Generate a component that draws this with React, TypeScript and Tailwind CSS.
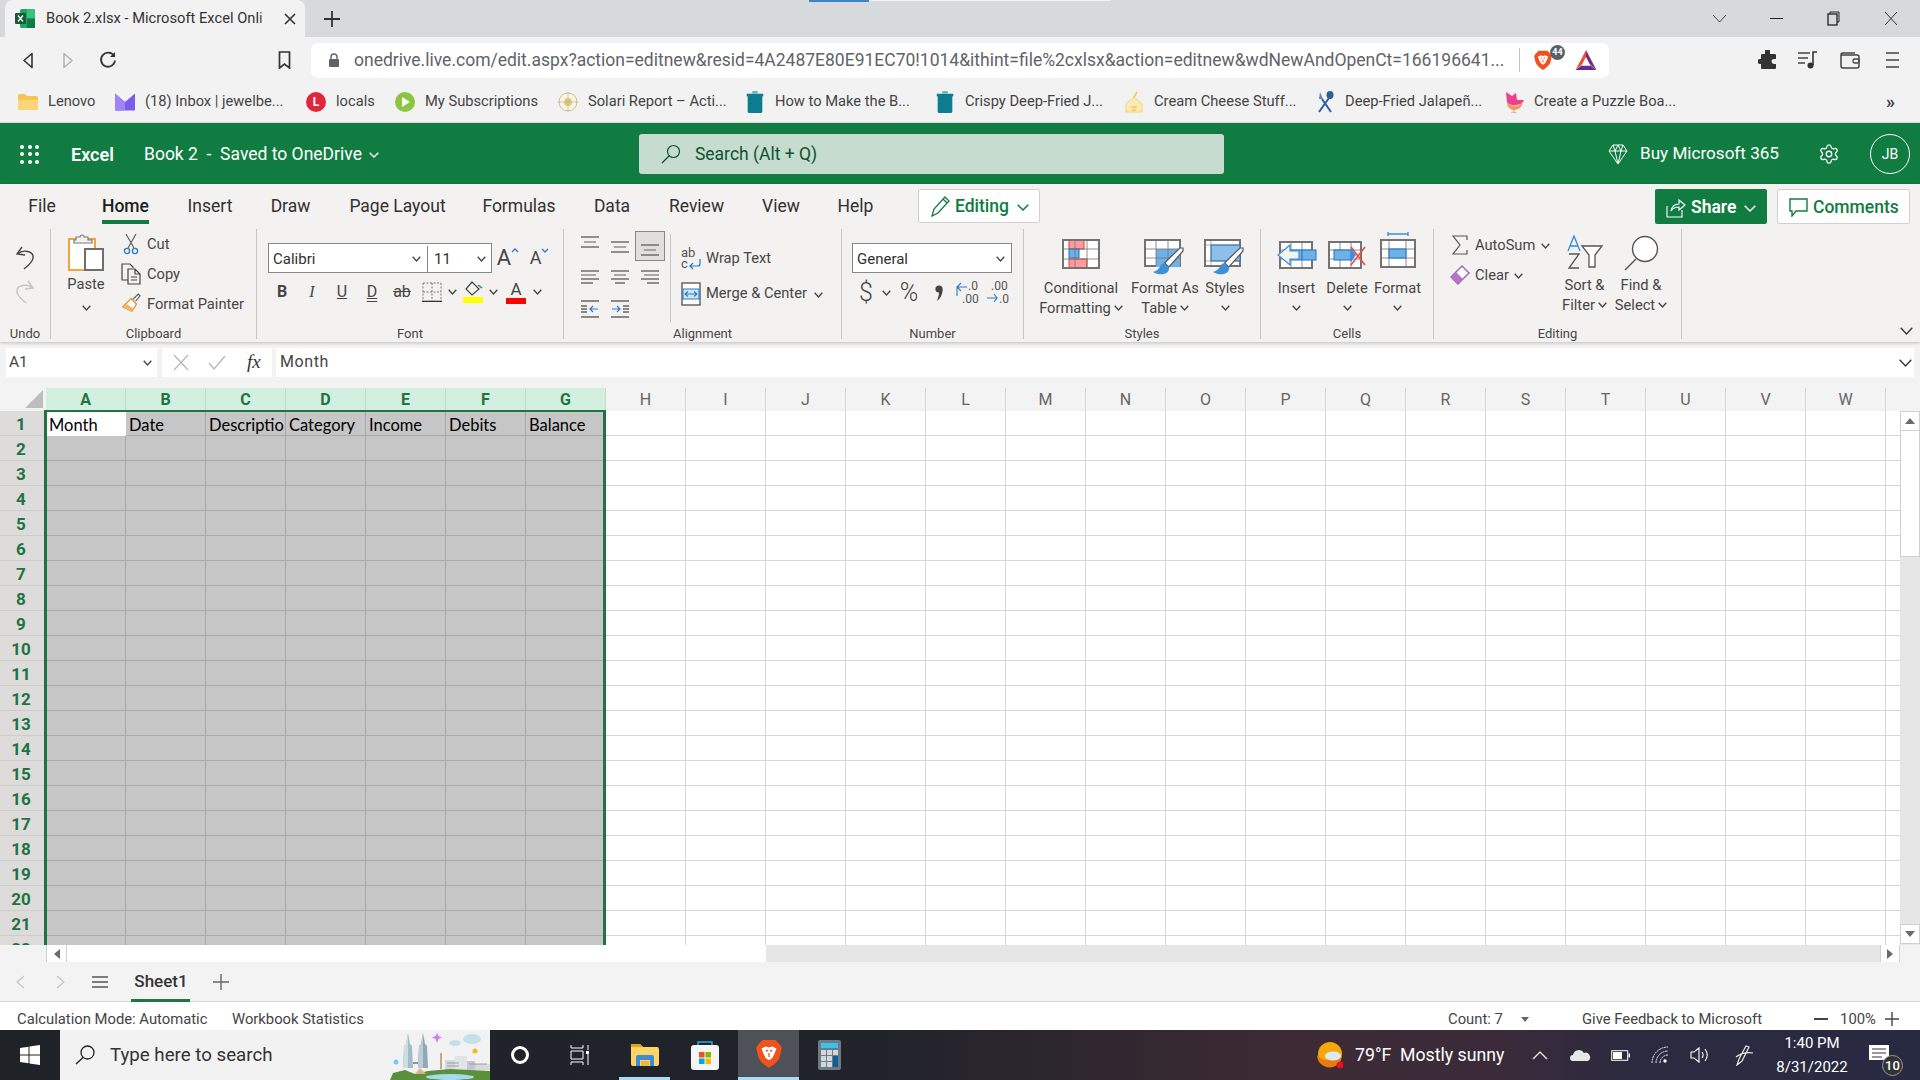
import React from "react";
import { Settings } from "lucide-react";

const Chev = ({ c = "#444", w = 9, h = 5, sw = 1.3 }: { c?: string; w?: number; h?: number; sw?: number }) => (
  <svg width={w} height={h + 1} viewBox={`0 0 ${w} ${h + 1}`} fill="none" className="inline-block shrink-0">
    <path d={`M.7.7 L${w / 2} ${h} L${w - 0.7} .7`} stroke={c} strokeWidth={sw} />
  </svg>
);

const Brave = ({ s = 24 }: { s?: number }) => (
  <svg width={s} height={s * 1.15} viewBox="0 0 24 28">
    <path d="M6 1 H18 L22 5 L24 8 L22 17 C20 22 15 25 12 27 C9 25 4 22 2 17 L0 8 L2 5 Z" fill="#f1511b" />
    <path d="M5 9 L9 7 L12 8 L15 7 L19 9 L17 14 L15 18 L12 20 L9 18 L7 14 Z" fill="#fff" />
    <path d="M9 11 h2 M13 11 h2 M12 13 v4" stroke="#f1511b" strokeWidth="1.2" />
  </svg>
);

const Bat = () => (
  <svg width="22" height="20" viewBox="0 0 24 23">
    <polygon points="12,0 0,23 8,16 12,8" fill="#e8552d" />
    <polygon points="12,0 24,23 16,16 12,8" fill="#7b2a7f" />
    <polygon points="0,23 24,23 16,17 8,17" fill="#662d91" />
    <polygon points="12,9 7,18 17,18" fill="#fff" />
  </svg>
);

const Trash = () => (
  <svg width="20" height="22" viewBox="0 0 20 24">
    <rect x="2" y="5" width="16" height="19" rx="2" fill="#0e7c8f" />
    <rect x="1" y="3" width="18" height="3" fill="#0e7c8f" />
    <rect x="7" y="0" width="6" height="3" fill="#6cb6c4" />
  </svg>
);

const bookmarks: { t: string; w: string; i: React.ReactNode }[] = [
  { t: "Lenovo", w: "w-[97px]", i: <svg width="20" height="20" viewBox="0 0 20 20"><path d="M0 4 a2 2 0 0 1 2-2 h5 l2 2 h9 a2 2 0 0 1 2 2 v10 a2 2 0 0 1-2 2 H2 a2 2 0 0 1-2-2Z" fill="#f5c452" /><path d="M0 8 H20 V16 a2 2 0 0 1-2 2 H2 a2 2 0 0 1-2-2Z" fill="#fbd677" /></svg> },
  { t: "(18) Inbox | jewelbe...", w: "w-[191px]", i: <svg width="21" height="18" viewBox="0 0 21 18"><path d="M0 0 L10.5 9 L21 0 V18 H0Z" fill="#7a5cf0" /><path d="M0 0 L10.5 9 V18 H0Z" fill="#9d84f7" /></svg> },
  { t: "locals", w: "w-[89px]", i: <span className="flex h-[20px] w-[20px] items-center justify-center rounded-full bg-[#e0263f] text-[12px] font-bold text-white">L</span> },
  { t: "My Subscriptions", w: "w-[163px]", i: <svg width="20" height="20" viewBox="0 0 20 20"><circle cx="10" cy="10" r="10" fill="#8cc63f" /><path d="M7 5 L15 10 L7 15Z" fill="#fff" /></svg> },
  { t: "Solari Report – Acti...", w: "w-[187px]", i: <svg width="20" height="20" viewBox="0 0 20 20"><circle cx="10" cy="10" r="9" fill="#faf6ea" stroke="#c9b98a" /><circle cx="10" cy="10" r="4" fill="#e2c67a" /><path d="M10 0 V20 M0 10 H20" stroke="#c9b98a" strokeWidth=".8" /></svg> },
  { t: "How to Make the B...", w: "w-[190px]", i: <Trash /> },
  { t: "Crispy Deep-Fried J...", w: "w-[189px]", i: <Trash /> },
  { t: "Cream Cheese Stuff...", w: "w-[191px]", i: <svg width="20" height="22" viewBox="0 0 20 22"><path d="M2 21 V13 L10 6 L18 13 V21Z" fill="#fbeab8" stroke="#f5d06f" /><path d="M10 6 L13 1 M7 16 h6 M8 19 h4" stroke="#f5c452" strokeWidth="1.5" /></svg> },
  { t: "Deep-Fried Jalapeñ...", w: "w-[189px]", i: <svg width="18" height="22" viewBox="0 0 18 22"><path d="M3 21 L13 7 M15 21 L6 8" stroke="#2d6099" strokeWidth="2" /><ellipse cx="14" cy="4" rx="3.5" ry="4" fill="#2d6099" /><path d="M4 1 L7 8 L3 8Z" fill="#5b86b5" /></svg> },
  { t: "Create a Puzzle Boa...", w: "w-[170px]", i: <svg width="20" height="22" viewBox="0 0 20 22"><path d="M2 1 L8 5 L12 2 L13 9 L20 9 C18 15 6 16 3 11Z" fill="#ee3e8e" /><path d="M3 11 C8 17 16 15 19 11 C18 17 14 19 9 19 C5 18 3 15 3 11Z" fill="#f19a5b" /><path d="M10 19 V22 M7 22 H13" stroke="#e88" /></svg> },
];

const gridStroke = "#737373";
const T = ({ children }: { children?: React.ReactNode }) => (
  <svg width="38" height="30" viewBox="0 0 38 30" className="block">
    <rect x="1" y="1" width="36" height="28" fill="#fff" />
    {children}
    <path d="M1 10 H37 M1 20 H37 M13 1 V29 M25 1 V29" stroke={gridStroke} strokeWidth="1" fill="none" opacity=".8" />
    <rect x="1" y="1" width="36" height="28" fill="none" stroke={gridStroke} strokeWidth="2" />
  </svg>
);
const Brush = () => (
  <g>
    <path d="M36 9 L39 9 L39 12 L25 28 L20.5 24Z" fill="#fff" stroke="#555" strokeWidth="1.2" />
    <path d="M20.5 24 C15 25 17 31 9 33 C16 37 26 36 25 28Z" fill="#3f8fd4" />
  </g>
);

const Conditional = () => (
  <T>
    <rect x="7" y="1" width="15" height="9" fill="#ff9aa2" stroke="#d9402b" />
    <rect x="7" y="10" width="10" height="9" fill="#6fb0e6" stroke="#1b74c5" />
    <rect x="7" y="20" width="18" height="9" fill="#ff9aa2" stroke="#d9402b" />
  </T>
);
const FormatTable = () => (
  <svg width="42" height="38" viewBox="0 0 42 38" className="block">
    <rect x="1" y="1" width="35" height="26" fill="#fff" stroke={gridStroke} strokeWidth="2" />
    <rect x="12" y="10" width="24" height="18" fill="#6fb0e6" />
    <path d="M1 10 H36 M1 19 H36 M12 1 V27 M24 1 V27" stroke={gridStroke} strokeWidth="1" opacity=".8" />
    <Brush />
  </svg>
);
const StylesIcon = () => (
  <svg width="42" height="38" viewBox="0 0 42 38" className="block">
    <rect x="1" y="1" width="35" height="26" fill="#fff" stroke={gridStroke} strokeWidth="2" />
    <rect x="7" y="6" width="29" height="16" fill="#8cbfec" stroke="#1b74c5" />
    <path d="M1 6 H36 M1 22 H36 M7 1 V27" stroke={gridStroke} opacity=".6" />
    <Brush />
  </svg>
);
const InsertIcon = () => (
  <svg width="40" height="28" viewBox="0 0 40 28" className="block">
    <rect x="3" y="1" width="32" height="26" fill="#fff" stroke={gridStroke} strokeWidth="2" />
    <path d="M3 9 H35 M3 18 H35 M14 1 V27 M25 1 V27" stroke={gridStroke} strokeWidth="1" opacity=".8" />
    <rect x="13" y="9" width="26" height="10" fill="#6fb0e6" stroke="#1b74c5" />
    <path d="M25 9 V19" stroke="#1b74c5" />
    <path d="M13 4 L1 14 L13 24 V18 H22 V10 H13Z" fill="#f3f2f1" stroke="#3f8fd4" strokeWidth="1.2" />
  </svg>
);
const DeleteIcon = () => (
  <svg width="38" height="28" viewBox="0 0 38 28" className="block">
    <rect x="1" y="1" width="32" height="26" fill="#fff" stroke={gridStroke} strokeWidth="2" />
    <path d="M1 9 H33 M1 18 H33 M12 1 V27 M23 1 V27" stroke={gridStroke} strokeWidth="1" opacity=".8" />
    <rect x="6" y="9" width="17" height="10" fill="#6fb0e6" stroke="#1b74c5" />
    <path d="M23 7 L28 14 L23 21Z" fill="#3f8fd4" />
    <path d="M23 6 L37 24 M37 6 L23 24" stroke="#ef4a4a" strokeWidth="1.6" />
  </svg>
);
const FormatIcon = () => (
  <svg width="36" height="36" viewBox="0 0 36 36" className="block">
    <path d="M8 2 H28 M8 0 V4 M28 0 V4" stroke="#3f8fd4" strokeWidth="1.4" />
    <rect x="1" y="8" width="34" height="27" fill="#fff" stroke={gridStroke} strokeWidth="2" />
    <path d="M1 17 H35 M1 26 H35 M9 8 V35 M26 8 V35" stroke={gridStroke} strokeWidth="1" opacity=".8" />
    <rect x="9" y="17" width="17" height="9" fill="#6fb0e6" stroke="#1b74c5" />
  </svg>
);

function Labelled({ icon, lines, w, chevOn, iconH = "h-[39px]" }: { icon: React.ReactNode; lines: string[]; w: string; chevOn?: boolean; iconH?: string }) {
  return (
    <div className={`${w} flex flex-col items-center`}>
      <div className={`${iconH} flex items-start justify-center`}>{icon}</div>
      <div className="h-[20px] whitespace-nowrap leading-[20px]">{lines[0]}</div>
      <div className="flex h-[20px] items-center gap-[3px] whitespace-nowrap leading-[20px]">
        {lines[1] && <span>{lines[1]}</span>}
        {chevOn && <Chev />}
      </div>
    </div>
  );
}

const Lines = ({ ys, xs }: { ys: number[]; xs: [number, number][] }) => (
  <svg width="20" height="24" viewBox="0 0 20 24">
    {ys.map((y, i) => (
      <path key={i} d={`M${xs[i][0]} ${y} H${xs[i][1]}`} stroke={i === 1 ? "#888" : "#666"} strokeWidth="1.4" />
    ))}
  </svg>
);

const Group = ({ w, label, children, last }: { w: string; label: string; children: React.ReactNode; last?: boolean }) => (
  <div className={`${w} relative h-[110px] shrink-0 ${last ? "" : "border-r border-[#c8c6c4]"}`}>
    <div className="h-[96px]">{children}</div>
    <div className="h-[18px] text-center text-[13px] leading-[18px] text-[#484644]">{label}</div>
  </div>
);

const Tab = ({ w, t }: { w: string; t: string }) => (
  <div className={`${w} pt-[12px] text-center leading-[20px]`}>{t}</div>
);

const cols = "ABCDEFGHIJKLMNOPQRSTUVW".split("");
const row1 = ["Month", "Date", "Descriptio", "Category", "Income", "Debits", "Balance"];
const rows = Array.from({ length: 22 }, (_, i) => i + 1);

function Sheet() {
  return (
    <div className="relative h-[557px] w-[1900px] overflow-hidden bg-white">
      <div className="grid grid-cols-[46px_repeat(23,80px)_1fr]">
        <div className="flex h-[23px] items-end justify-end bg-[#f3f3f3] pr-[3px] pb-[3px]">
          <svg width="18" height="18" viewBox="0 0 18 18"><polygon points="18,0 18,18 0,18" fill="#bdbdbd" /></svg>
        </div>
        {cols.map((c, i) => (
          <div
            key={c}
            className={
              i < 7
                ? "flex h-[23px] items-center justify-center border-r border-[#c6d8cd] bg-[#d3efe0] text-[16px] font-bold text-[#217346]"
                : "flex h-[23px] items-center justify-center border-r border-[#d6d6d6] bg-[#f3f3f3] text-[16px] text-[#666]"
            }
          >
            {c}
          </div>
        ))}
        <div className="h-[23px] bg-[#f3f3f3]" />
        {rows.map((r) => (
          <React.Fragment key={r}>
            <div className="flex h-[25px] items-center justify-center border-b border-[#cfcdcb] bg-[#dedcda] pr-[4px] pt-[4px] text-[17px] font-bold text-[#217346]">
              {r}
            </div>
            {cols.map((c, i) => {
              const sel = i < 7;
              const white = r === 1 && i === 0;
              return (
                <div
                  key={c}
                  className={
                    white
                      ? "h-[25px] overflow-hidden whitespace-nowrap bg-white pl-[3px] pt-[3px] font-[Lato,sans-serif] text-[16.5px] leading-[23px] text-black"
                      : sel
                      ? "h-[25px] overflow-hidden whitespace-nowrap border-r border-b border-[#a9a9a9] bg-[#c6c6c6] pl-[3px] pt-[3px] font-[Lato,sans-serif] text-[16.5px] leading-[23px] text-black"
                      : "h-[25px] border-r border-b border-[#d6d6d6] bg-white"
                  }
                >
                  {r === 1 && sel ? row1[i] : ""}
                </div>
              );
            })}
            <div className="h-[25px] border-b border-[#d6d6d6] bg-white" />
          </React.Fragment>
        ))}
      </div>
      <div className="pointer-events-none absolute left-[44px] top-[22px] h-[800px] w-[562px] border-x-[3px] border-y-[2px] border-[#217346]" />
    </div>
  );
}

export default function App() {
  return (
    <div className="flex h-[1080px] w-[1920px] flex-col overflow-hidden bg-[#f3f3f3] font-[Roboto,sans-serif] text-[#333]">
      {/* Browser tab strip */}
      <div className="relative flex h-[37px] shrink-0 bg-[#d6dadd] pl-[5px]">
        <div className="absolute left-[809px] top-0 h-[2px] w-[60px] bg-[#3d85c6]" />
        <div className="absolute left-[869px] top-0 h-[1px] w-[241px] bg-[#f2f2f2]" />
        <div className="flex h-[37px] w-[300px] items-center rounded-t-[8px] bg-[#f2f2f2] pl-[10px]">
          <svg width="20" height="19" viewBox="0 0 20 19" className="shrink-0">
            <rect x="5" y="0" width="15" height="19" rx="1.5" fill="#21a366" />
            <rect x="12" y="0" width="8" height="9.5" fill="#33c481" />
            <rect x="12" y="9.5" width="8" height="9.5" fill="#107c41" />
            <rect x="0" y="4" width="11" height="11" rx="1" fill="#185c37" />
            <path d="M3 6.5 L8 12.5 M8 6.5 L3 12.5" stroke="#fff" strokeWidth="1.2" />
          </svg>
          <div className="relative ml-[11px] w-[227px] whitespace-nowrap text-[14.7px]">
            Book 2.xlsx - Microsoft Excel Onli
            <span className="absolute right-0 top-0 h-full w-[14px] bg-[linear-gradient(90deg,rgba(242,242,242,0),#f2f2f2)]" />
          </div>
          <svg width="12" height="12" viewBox="0 0 12 12" className="ml-[11px]"><path d="M1 1 L11 11 M11 1 L1 11" stroke="#333" strokeWidth="1.6" /></svg>
        </div>
        <div className="flex w-[54px] items-center justify-center">
          <svg width="16" height="16" viewBox="0 0 16 16"><path d="M8 0 V16 M0 8 H16" stroke="#333" strokeWidth="1.8" /></svg>
        </div>
        <div className="flex-1" />
        <div className="flex w-[58px] items-center justify-center"><svg width="15" height="9" viewBox="0 0 15 9" fill="none"><path d="M1 1 L7.5 8 L14 1" stroke="#444" strokeWidth="1" /></svg></div>
        <div className="flex w-[57px] items-center justify-center"><div className="h-[1.5px] w-[13px] bg-[#222]" /></div>
        <div className="flex w-[57px] items-center justify-center"><svg width="13" height="15" viewBox="0 0 13 15" fill="none"><rect x="1" y="3" width="9" height="11" stroke="#222" strokeWidth="1.3" /><path d="M3 3 V1 H12 V11 H10" stroke="#222" /></svg></div>
        <div className="flex w-[58px] items-center justify-center"><svg width="14" height="15" viewBox="0 0 14 15"><path d="M1 1 L13 14 M13 1 L1 14" stroke="#333" strokeWidth="1" /></svg></div>
      </div>
      {/* Browser toolbar */}
      <div className="flex h-[46px] shrink-0 items-center bg-[#f2f2f2] pl-[8px]">
        <div className="flex w-[40px] justify-center"><svg width="12" height="17" viewBox="0 0 12 17" fill="none"><path d="M10 1.5 L2 8.5 L10 15.5Z" stroke="#333" strokeWidth="1.6" strokeLinejoin="round" /></svg></div>
        <div className="flex w-[40px] justify-center"><svg width="12" height="17" viewBox="0 0 12 17" fill="none"><path d="M2 1.5 L10 8.5 L2 15.5Z" stroke="#b5b5b5" strokeWidth="1.6" strokeLinejoin="round" /></svg></div>
        <div className="flex w-[40px] justify-center"><svg width="18" height="18" viewBox="0 0 18 18" fill="none"><path d="M15 5 A7 7 0 1 0 16 9.5" stroke="#333" strokeWidth="1.8" /><path d="M16 1 V6 H11Z" fill="#333" /></svg></div>
        <div className="ml-[136px] flex w-[40px] justify-center"><svg width="13" height="18" viewBox="0 0 13 18" fill="none"><path d="M1.5 1 H11.5 V17 L6.5 13 L1.5 17Z" stroke="#333" strokeWidth="1.7" /></svg></div>
        <div className="ml-[7px] flex h-[35px] w-[1298px] items-center rounded-[7px] bg-white pl-[17px]">
          <svg width="12" height="14" viewBox="0 0 12 14" className="shrink-0"><rect x="1" y="6" width="10" height="8" rx="1" fill="#5f6368" /><path d="M3 6 V4 a3 3 0 0 1 6 0 V6" stroke="#5f6368" strokeWidth="1.4" fill="none" /></svg>
          <div className="ml-[14px] w-[1151px] whitespace-nowrap text-[17.5px] text-[#5f6368]">onedrive.live.com/edit.aspx?action=editnew&amp;resid=4A2487E80E91EC70!1014&amp;ithint=file%2cxlsx&amp;action=editnew&amp;wdNewAndOpenCt=166196641...</div>
          <div className="ml-[14px] h-[24px] w-px bg-[#c4c4c4]" />
          <div className="relative ml-[14px] flex h-[28px] w-[18px] items-center">
            <Brave s={18} />
            <span className="absolute left-[16px] top-[-1px] flex h-[15px] w-[15px] items-center justify-center rounded-full bg-[#5a5f6b] text-[9px] font-bold text-white">44</span>
          </div>
          <div className="ml-[23px]"><Bat /></div>
        </div>
        <div className="ml-[139px] flex w-[40px] justify-center"><svg width="20" height="20" viewBox="0 0 20 20"><path d="M7 1 a2.5 2.5 0 0 1 5 0 V4 H17 a1 1 0 0 1 1 1 V9 H16 a2.5 2.5 0 0 0 0 5 H18 V18 a1 1 0 0 1-1 1 H4 a1 1 0 0 1-1-1 V14 H2 a2.5 2.5 0 0 1 0-5 H3 V5 a1 1 0 0 1 1-1 H7Z" fill="#333" /></svg></div>
        <div className="flex w-[40px] justify-center"><svg width="20" height="18" viewBox="0 0 20 18" fill="none"><path d="M0 2 H12 M0 7 H10 M0 12 H7" stroke="#444" strokeWidth="1.6" /><path d="M15 14 V1 H19" stroke="#333" strokeWidth="1.6" /><circle cx="12.5" cy="14.5" r="3" fill="#333" /></svg></div>
        <div className="ml-[2px] flex w-[40px] justify-center"><svg width="20" height="18" viewBox="0 0 20 18" fill="none"><path d="M1 4 a2 2 0 0 1 2-2 H15 M1 4 V15 a2 2 0 0 0 2 2 H17 a2 2 0 0 0 2-2 V6 a2 2 0 0 0-2-2 H1" stroke="#444" strokeWidth="1.5" /><rect x="13" y="8" width="6" height="4" rx="1.5" stroke="#444" strokeWidth="1.3" /></svg></div>
        <div className="ml-[2px] flex w-[40px] justify-center"><svg width="13" height="16" viewBox="0 0 13 16"><path d="M0 1 H13 M0 8 H13 M0 15 H13" stroke="#444" strokeWidth="1.7" /></svg></div>
      </div>
      {/* Bookmarks */}
      <div className="flex h-[40px] shrink-0 items-center border-b border-[#d8d8d8] bg-[#f2f2f2] pb-[2px] pl-[18px] text-[14.7px] text-[#444]">
        {bookmarks.map((b) => (
          <div key={b.t} className={`${b.w} flex shrink-0 items-center whitespace-nowrap`}>
            <span className="flex h-[24px] w-[20px] shrink-0 items-center justify-center">{b.i}</span>
            <span className="ml-[10px]">{b.t}</span>
          </div>
        ))}
        <div className="ml-[212px] text-[18px] font-bold leading-[18px]">»</div>
      </div>
      {/* Excel title bar */}
      <div className="flex h-[61px] shrink-0 items-center bg-[#107c41] pt-[1px] text-[17.5px] text-white">
        <div className="ml-[20px] grid w-[19px] grid-cols-3 gap-[3.5px]">
          {Array.from({ length: 9 }, (_, i) => <span key={i} className="h-[4px] w-[4px] rounded-full bg-white" />)}
        </div>
        <div className="ml-[32px] w-[73px] text-[18px] font-semibold">Excel</div>
        <div className="whitespace-nowrap">Book 2&nbsp; -&nbsp; Saved to OneDrive</div>
        <div className="ml-[7px]"><Chev c="#fff" w={10} h={5} /></div>
        <div className="ml-[260px] flex h-[40px] w-[585px] items-center rounded-[3px] bg-[#c5dccf] pl-[22px] text-[#10522f]">
          <svg width="20" height="20" viewBox="0 0 20 20" fill="none"><circle cx="12.5" cy="7.5" r="6" stroke="#10522f" strokeWidth="1.2" /><path d="M8 12 L1 19" stroke="#10522f" strokeWidth="1.3" /></svg>
          <span className="ml-[14px]">Search (Alt + Q)</span>
        </div>
        <div className="flex-1" />
        <svg width="20" height="21" viewBox="0 0 20 21" fill="none" className="mr-[12px]"><path d="M5 1 H15 L19 7 L10 20 L1 7Z M1 7 H19 M7 7 L10 20 L13 7 M5 1 L7 7 L10 1 L13 7 L15 1" stroke="#fff" strokeWidth="1" /></svg>
        <div className="w-[178px] whitespace-nowrap text-[17.1px]">Buy Microsoft 365</div>
        <div className="flex w-[22px] justify-center"><Settings size={22} strokeWidth={1.4} color="#fff" /></div>
        <div className="ml-[30px] mr-[10px] flex h-[40px] w-[40px] items-center justify-center rounded-full border border-white text-[14px]">JB</div>
      </div>
      {/* Ribbon */}
      <div className="z-10 flex h-[158px] shrink-0 flex-col bg-[#f3f2f1] text-[14.7px] text-[#484644] shadow-[0_1px_3px_rgba(0,0,0,0.22)]">
        <div className="flex h-[40px] shrink-0 pl-[9px] text-[17.5px] text-[#323130]">
          <Tab w="w-[66px]" t="File" />
          <div className="flex w-[101px] justify-center pt-[12px]">
            <span className="inline-block h-[28px] border-b-[4px] border-[#107c41] font-medium leading-[20px] text-[#201f1e]">Home</span>
          </div>
          <Tab w="w-[68px]" t="Insert" />
          <Tab w="w-[93px]" t="Draw" />
          <Tab w="w-[121px]" t="Page Layout" />
          <Tab w="w-[122px]" t="Formulas" />
          <Tab w="w-[64px]" t="Data" />
          <Tab w="w-[105px]" t="Review" />
          <Tab w="w-[64px]" t="View" />
          <Tab w="w-[85px]" t="Help" />
          <div className="ml-[20px] mt-[5px] flex h-[34px] w-[122px] items-center rounded-[2px] border border-[#d1d1d1] bg-white pl-[12px] pt-[1px] font-medium text-[#107c41]">
            <svg width="19" height="21" viewBox="0 0 19 21" fill="none"><path d="M1 20 L3 13 L14 1 L18 5 L7 17Z M12 3 L16 7" stroke="#107c41" strokeWidth="1.3" /></svg>
            <span className="ml-[5px]">Editing</span>
            <span className="ml-[8px]"><Chev c="#107c41" w={12} h={6} sw={1.5} /></span>
          </div>
          <div className="flex-1" />
          <div className="mt-[5px] flex h-[35px] w-[112px] items-center rounded-[2px] bg-[#107c41] pl-[11px] pt-[1px] font-semibold text-white">
            <svg width="20" height="21" viewBox="0 0 20 21" fill="none"><path d="M1 9 V20 H16 V13 M5 14 C6 9 9 7 13 7 V3 L19 8 L13 13 V10 C10 10 7 11 5 14Z" stroke="#fff" strokeWidth="1.1" /></svg>
            <span className="ml-[5px]">Share</span>
            <span className="ml-[8px]"><Chev c="#fff" w={12} h={6} sw={1.4} /></span>
          </div>
          <div className="ml-[10px] mr-[10px] mt-[5px] flex h-[35px] w-[133px] items-center rounded-[2px] border border-[#d1d1d1] bg-white pl-[11px] pt-[1px] font-medium text-[#107c41]">
            <svg width="19" height="19" viewBox="0 0 19 19" fill="none"><path d="M1 1 H18 V13 H7 L3 18 V13 H1Z" stroke="#107c41" strokeWidth="1.4" /></svg>
            <span className="ml-[5px]">Comments</span>
          </div>
        </div>
        <div className="mt-[5px] flex">
          <Group w="w-[51px]" label="Undo">
            <div className="flex flex-col items-center pt-[17px]">
              <svg width="20" height="24" viewBox="0 0 20 24" fill="none"><path d="M7 1 L2 8 L10 9 M2.5 8 C8 3 19 5 18 12 C17.5 17 12 20 9 23" stroke="#484644" strokeWidth="1.4" /></svg>
              <svg width="20" height="24" viewBox="0 0 20 24" fill="none" className="mt-[10px]"><path d="M13 1 L18 8 L10 9 M17.5 8 C12 3 1 5 2 12 C2.5 17 8 20 11 23" stroke="#c4c4c4" strokeWidth="1.4" /></svg>
            </div>
          </Group>
          <Group w="w-[206px]" label="Clipboard">
            <div className="flex">
              <div className="flex w-[70px] flex-col items-center pt-[5px]">
                <svg width="36" height="37" viewBox="0 0 36 37" fill="none">
                  <rect x="1" y="5" width="26" height="31" fill="#fff" stroke="#f2a33c" strokeWidth="2" />
                  <path d="M8 6 V3 H12 a2 2 0 0 1 4 0 H20 V6 H24 V9 H6 V6Z" fill="#f3f2f1" stroke="#7a7a7a" strokeWidth="1.2" />
                  <rect x="17" y="15" width="18" height="21" fill="#fff" stroke="#6e6e6e" strokeWidth="2" />
                </svg>
                <div className="mt-[3px] leading-[20px]">Paste</div>
                <div className="mt-[2px]"><Chev /></div>
              </div>
              <div className="flex flex-col">
                <div className="flex h-[30px] items-center">
                  <span className="flex w-[20px] justify-center"><svg width="16" height="22" viewBox="0 0 16 22" fill="none"><path d="M3 1 L11 15 M13 1 L5 15" stroke="#555" strokeWidth="1.1" /><circle cx="4" cy="18" r="2.6" stroke="#2a7bc4" strokeWidth="1.3" /><circle cx="12" cy="18" r="2.6" stroke="#2a7bc4" strokeWidth="1.3" /></svg></span>
                  <span className="ml-[6px]">Cut</span>
                </div>
                <div className="flex h-[30px] items-center">
                  <span className="flex w-[20px] justify-center"><svg width="20" height="22" viewBox="0 0 20 22" fill="none"><path d="M7 17 H1 V1 H9 L12 4 V5" stroke="#444" strokeWidth="1.2" /><path d="M7 6 H14 L19 11 V21 H7Z M14 6 V11 H19 M10 14 H16 M10 17 H16" stroke="#444" strokeWidth="1.2" /></svg></span>
                  <span className="ml-[6px]">Copy</span>
                </div>
                <div className="flex h-[30px] items-center">
                  <span className="flex w-[20px] justify-center"><svg width="22" height="24" viewBox="0 0 22 24" fill="none"><path d="M13 7 L19 1 L21 3 L16 9" stroke="#555" strokeWidth="1.2" /><path d="M11 6 L17 12 L12 20 L2 15Z" fill="#fff" stroke="#e88a2c" strokeWidth="1.4" /><path d="M2 15 L12 20 L14 17 L6 12Z" fill="#f5b76a" /></svg></span>
                  <span className="ml-[6px] whitespace-nowrap">Format Painter</span>
                </div>
              </div>
            </div>
          </Group>
          <Group w="w-[307px]" label="Font">
            <div className="pl-[10px] pt-[14px]">
              <div className="ml-[1px] flex items-center">
                <div className="flex h-[30px] w-[224px] items-center border border-[#8a8886] bg-white pt-[2px] text-[15px] text-[#323130]">
                  <div className="flex w-[159px] items-center justify-between border-r border-[#8a8886] pl-[4px] pr-[6px] leading-[26px]">Calibri<Chev /></div>
                  <div className="flex flex-1 items-center justify-between pl-[6px] pr-[5px]">11<Chev /></div>
                </div>
                <div className="flex w-[32px] items-center justify-center">
                  <span className="text-[22px] leading-[22px]">A</span>
                  <svg width="8" height="12" viewBox="0 0 8 12" fill="none" className="self-start"><path d="M1 5 L4 2 L7 5" stroke="#2a7bc4" strokeWidth="1.3" /></svg>
                </div>
                <div className="flex w-[31px] items-center justify-center">
                  <span className="text-[18px] leading-[22px]">A</span>
                  <svg width="8" height="12" viewBox="0 0 8 12" fill="none" className="self-start"><path d="M1 2 L4 5 L7 2" stroke="#2a7bc4" strokeWidth="1.3" /></svg>
                </div>
              </div>
              <div className="mt-[4px] flex h-[30px] items-center text-[16px]">
                <span className="w-[30px] text-center font-bold">B</span>
                <span className="w-[30px] text-center font-[Liberation_Serif,serif] italic">I</span>
                <span className="w-[30px] text-center underline">U</span>
                <span className="w-[30px] text-center underline decoration-double">D</span>
                <span className="w-[30px] text-center line-through">ab</span>
                <span className="flex w-[30px] justify-center"><svg width="20" height="20" viewBox="0 0 20 20" fill="none"><path d="M1 1 H19 M1 1 V19 M19 1 V19 M1 10 H19 M10 1 V19" stroke="#777" strokeWidth="1" strokeDasharray="2 1.5" /><path d="M0 19.5 H20" stroke="#333" strokeWidth="1.6" /></svg></span>
                <span className="flex w-[11px] justify-center"><Chev /></span>
                <span className="flex w-[30px] justify-center"><svg width="21" height="22" viewBox="0 0 21 22" fill="none"><path d="M9 1 L16 8 L9 14 L3 8Z" stroke="#444" strokeWidth="1.2" /><path d="M15 4 L19 7" stroke="#2a7bc4" strokeWidth="1.5" /><rect x="0" y="16" width="20" height="6" fill="#ffff00" /></svg></span>
                <span className="flex w-[10px] justify-center"><Chev /></span>
                <span className="flex w-[36px] flex-col items-center">
                  <span className="text-[17px] leading-[17px]">A</span>
                  <span className="h-[6px] w-[20px] bg-[#ff0000]" />
                </span>
                <span className="flex w-[7px] justify-center"><Chev /></span>
              </div>
            </div>
          </Group>
          <Group w="w-[278px]" label="Alignment">
            <div className="flex">
              <div className="ml-[11px] mt-[2px] grid w-[90px] grid-cols-3">
                <div className="flex h-[31px] w-[30px] items-center justify-center"><Lines ys={[2, 7, 12]} xs={[[1, 19], [4, 16], [1, 19]]} /></div>
                <div className="flex h-[31px] w-[30px] items-center justify-center"><Lines ys={[7, 12, 17]} xs={[[1, 19], [4, 16], [1, 19]]} /></div>
                <div className="flex h-[30px] w-[30px] items-center justify-center border border-[#8a8886] bg-[#e1dfdd]"><Lines ys={[11, 16, 21]} xs={[[1, 19], [4, 16], [1, 19]]} /></div>
                <div className="flex h-[31px] w-[30px] items-center justify-center"><Lines ys={[5, 9, 13, 17]} xs={[[1, 19], [1, 16], [1, 19], [1, 13]]} /></div>
                <div className="flex h-[31px] w-[30px] items-center justify-center"><Lines ys={[5, 9, 13, 17]} xs={[[1, 19], [4, 16], [1, 19], [5, 15]]} /></div>
                <div className="flex h-[31px] w-[30px] items-center justify-center"><Lines ys={[5, 9, 13, 17]} xs={[[1, 19], [4, 19], [1, 19], [7, 19]]} /></div>
                <div className="flex h-[31px] w-[30px] items-center justify-center"><svg width="20" height="20" viewBox="0 0 20 20" fill="none"><path d="M1 2 H19 M1 18 H19 M1 7 H7 M1 10 H7 M1 13 H7" stroke="#666" strokeWidth="1.3" /><path d="M18 10 H10 M13 7 L10 10 L13 13" stroke="#2a7bc4" strokeWidth="1.2" /></svg></div>
                <div className="flex h-[31px] w-[30px] items-center justify-center"><svg width="20" height="20" viewBox="0 0 20 20" fill="none"><path d="M1 2 H19 M1 18 H19 M13 7 H19 M13 10 H19 M13 13 H19" stroke="#666" strokeWidth="1.3" /><path d="M2 10 H10 M7 7 L10 10 L7 13" stroke="#2a7bc4" strokeWidth="1.2" /></svg></div>
              </div>
              <div className="ml-[5px] mt-[5px] h-[88px] w-px bg-[#c8c6c4]" />
              <div className="pl-[9px] pt-[12px]">
                <div className="flex h-[35px] items-center">
                  <span className="flex w-[22px] justify-center"><svg width="22" height="26" viewBox="0 0 22 26" fill="none"><text x="1" y="11" fontSize="13" fill="#555" fontFamily="Roboto">ab</text><text x="1" y="22" fontSize="13" fill="#555" fontFamily="Roboto">c</text><path d="M20 13 V18 a2 2 0 0 1-2 2 H10 M13 17 L10 20 L13 23" stroke="#2a7bc4" strokeWidth="1.2" /></svg></span>
                  <span className="ml-[4px] whitespace-nowrap">Wrap Text</span>
                </div>
                <div className="flex h-[35px] items-center">
                  <span className="flex w-[22px] justify-center"><svg width="20" height="24" viewBox="0 0 20 24" fill="none"><rect x="1" y="1" width="18" height="22" fill="#fff" stroke="#666" strokeWidth="1.5" /><rect x="2" y="7" width="16" height="10" fill="#cfe4f7" stroke="#2a7bc4" /><path d="M4 12 H16 M7 9.5 L4 12 L7 14.5 M13 9.5 L16 12 L13 14.5" stroke="#2a7bc4" strokeWidth="1.1" /></svg></span>
                  <span className="ml-[4px] whitespace-nowrap">Merge &amp; Center</span>
                  <span className="ml-[7px]"><Chev /></span>
                </div>
              </div>
            </div>
          </Group>
          <Group w="w-[182px]" label="Number">
            <div className="pl-[10px] pt-[14px]">
              <div className="flex h-[30px] w-[160px] items-center justify-between border border-[#8a8886] bg-white pl-[4px] pr-[6px] pt-[2px] text-[15px] text-[#323130]">General<Chev /></div>
              <div className="mt-[4px] flex h-[32px] items-center text-[#484644]">
                <span className="w-[28px] text-center text-[25px] font-light leading-[30px]">$</span>
                <span className="flex w-[12px] justify-center"><Chev /></span>
                <span className="w-[34px] text-center text-[25px] font-light leading-[30px]">%</span>
                <span className="flex w-[26px] justify-center"><svg width="8" height="16" viewBox="0 0 8 16"><circle cx="4" cy="4" r="3.6" fill="#444" /><path d="M7.5 4 C8 9 5 14 2 16 C4 11 4 8 4 6Z" fill="#444" /></svg></span>
                <span className="flex w-[34px] justify-center"><svg width="26" height="28" viewBox="0 0 26 28" fill="none"><text x="12" y="11" fontSize="12" fill="#555" fontFamily="Roboto">.0</text><text x="6" y="24" fontSize="12" fill="#555" fontFamily="Roboto">.00</text><path d="M11 8 H1 M5 4 L1 8 L5 12 M1 8 V17" stroke="#2a7bc4" strokeWidth="1.1" /></svg></span>
                <span className="flex w-[26px] justify-center"><svg width="26" height="28" viewBox="0 0 26 28" fill="none"><text x="5" y="11" fontSize="12" fill="#555" fontFamily="Roboto">.00</text><text x="13" y="24" fontSize="12" fill="#555" fontFamily="Roboto">.0</text><path d="M1 19 H11 M8 15 L11 19 L8 23" stroke="#2a7bc4" strokeWidth="1.1" /></svg></span>
              </div>
            </div>
          </Group>
          <Group w="w-[237px]" label="Styles">
            <div className="flex pl-[13px] pt-[10px]">
              <Labelled w="w-[88px]" icon={<Conditional />} lines={["Conditional", "Formatting"]} chevOn />
              <Labelled w="w-[80px]" icon={<FormatTable />} lines={["Format As", "Table"]} chevOn />
              <Labelled w="w-[40px]" icon={<StylesIcon />} lines={["Styles", ""]} chevOn />
            </div>
          </Group>
          <Group w="w-[173px]" label="Cells">
            <div className="flex pl-[10px] pt-[3px]">
              <Labelled w="w-[51px]" iconH="h-[46px] pt-[9px]" icon={<InsertIcon />} lines={["Insert", ""]} chevOn />
              <Labelled w="w-[50px]" iconH="h-[46px] pt-[9px]" icon={<DeleteIcon />} lines={["Delete", ""]} chevOn />
              <Labelled w="w-[51px]" iconH="h-[46px]" icon={<FormatIcon />} lines={["Format", ""]} chevOn />
            </div>
          </Group>
          <Group w="w-[248px]" label="Editing">
            <div className="flex pl-[16px]">
              <div className="w-[107px] pt-[1px]">
                <div className="flex h-[30px] items-center">
                  <span className="flex w-[20px] justify-center"><svg width="16" height="20" viewBox="0 0 16 20" fill="none"><path d="M15 5 V1 H1 L8 10 L1 19 H15 V15" stroke="#555" strokeWidth="1.2" /></svg></span>
                  <span className="ml-[5px]">AutoSum</span>
                  <span className="ml-[6px]"><Chev /></span>
                </div>
                <div className="flex h-[30px] items-center">
                  <span className="flex w-[20px] justify-center"><svg width="20" height="20" viewBox="0 0 20 20"><path d="M12 1 L19 8 L8 19 L1 12Z" fill="#fff" stroke="#a05bb5" strokeWidth="1.4" /><path d="M6 7 L13 14 L8 19 L1 12Z" fill="#b772ca" /></svg></span>
                  <span className="ml-[5px]">Clear</span>
                  <span className="ml-[5px]"><Chev /></span>
                </div>
              </div>
              <div className="pt-[6px]">
                <Labelled w="w-[55px]" iconH="h-[40px]" icon={<svg width="36" height="34" viewBox="0 0 36 34" fill="none"><path d="M1 16 L7 1 L13 16 M3.5 11 H10.5" stroke="#2a8ae0" strokeWidth="1.3" /><path d="M2 19 H12 L2 33 H12" stroke="#555" strokeWidth="1.3" /><path d="M15 11 H35 L28 20 V32 H22 V20Z" fill="#fff" stroke="#555" strokeWidth="1.3" /></svg>} lines={["Sort &", "Filter"]} chevOn />
              </div>
              <div className="pt-[6px]">
                <Labelled w="w-[58px]" iconH="h-[40px]" icon={<svg width="36" height="36" viewBox="0 0 36 36" fill="none"><circle cx="22" cy="14" r="12.5" fill="#fff" stroke="#555" strokeWidth="1.4" /><path d="M13 24 L2 35" stroke="#555" strokeWidth="1.4" /></svg>} lines={["Find &", "Select"]} chevOn />
              </div>
            </div>
          </Group>
          <div className="flex flex-1 items-end justify-end pb-[4px] pr-[7px]">
            <Chev c="#333" w={13} h={7} sw={1.3} />
          </div>
        </div>
      </div>
      {/* Formula bar */}
      <div className="mt-[6px] flex h-[29px] shrink-0 items-center pl-[6px] text-[15.5px] text-[#444]">
        <div className="flex h-[29px] w-[151px] items-center justify-between bg-white pl-[3px] pr-[5px] pt-[1px]">A1<Chev /></div>
        <div className="ml-[5px] flex h-[29px] w-[110px] items-center bg-white">
          <svg width="16" height="17" viewBox="0 0 16 17" className="ml-[11px]"><path d="M1 1 L15 16 M15 1 L1 16" stroke="#b5b5b5" strokeWidth="1.2" /></svg>
          <svg width="18" height="15" viewBox="0 0 18 15" fill="none" className="ml-[19px]"><path d="M1 8 L6 14 L17 1" stroke="#b5b5b5" strokeWidth="1.2" /></svg>
          <span className="ml-[21px] font-[Liberation_Serif,serif] text-[19px] italic text-[#333]">fx</span>
        </div>
        <div className="ml-[4px] flex h-[29px] w-[1638px] items-center justify-between bg-white pl-[4px] pr-[2px]">
          <span className="pb-[1px] text-[16px] tracking-[0.6px]">Month</span>
          <Chev c="#333" w={13} h={7} sw={1.3} />
        </div>
      </div>
      <div className="h-[11px] shrink-0" />
      {/* Sheet */}
      <div className="flex h-[557px] shrink-0">
        <Sheet />
        <div className="flex w-[20px] flex-col">
          <div className="h-[23px] bg-[#f3f3f3]" />
          <div className="flex h-[20px] items-center justify-center border border-[#d0d0d0] bg-white"><svg width="10" height="6" viewBox="0 0 10 6"><polygon points="5,0 10,6 0,6" fill="#6a6a6a" /></svg></div>
          <div className="h-[126px] border-x border-b border-[#d0d0d0] bg-white" />
          <div className="flex-1 bg-[#e6e6e6]" />
          <div className="flex h-[20px] items-center justify-center border border-[#d0d0d0] bg-white"><svg width="10" height="6" viewBox="0 0 10 6"><polygon points="0,0 10,0 5,6" fill="#6a6a6a" /></svg></div>
          <div className="h-[1px] bg-[#e6e6e6]" />
        </div>
      </div>
      {/* Horizontal scrollbar */}
      <div className="flex h-[17px] shrink-0 pl-[46px]">
        <div className="flex w-[21px] items-center justify-center border-x border-[#d0d0d0] bg-white"><svg width="6" height="10" viewBox="0 0 6 10"><polygon points="0,5 6,0 6,10" fill="#6a6a6a" /></svg></div>
        <div className="w-[699px] bg-white" />
        <div className="w-[1114px] bg-[#e6e6e6]" />
        <div className="flex w-[20px] items-center justify-center border-x border-[#d0d0d0] bg-white"><svg width="6" height="10" viewBox="0 0 6 10"><polygon points="6,5 0,0 0,10" fill="#6a6a6a" /></svg></div>
      </div>
      {/* Sheet tabs */}
      <div className="flex h-[40px] shrink-0 items-center border-b border-[#d6d6d6] text-[#555]">
        <div className="flex w-[40px] justify-center"><svg width="9" height="14" viewBox="0 0 9 14" fill="none"><path d="M8 1 L1 7 L8 13" stroke="#c4c4c4" strokeWidth="1.2" /></svg></div>
        <div className="flex w-[40px] justify-center"><svg width="9" height="14" viewBox="0 0 9 14" fill="none"><path d="M1 1 L8 7 L1 13" stroke="#c4c4c4" strokeWidth="1.2" /></svg></div>
        <div className="flex w-[40px] justify-center"><svg width="16" height="12" viewBox="0 0 16 12"><path d="M0 1 H16 M0 6 H16 M0 11 H16" stroke="#555" strokeWidth="1.5" /></svg></div>
        <div className="relative ml-[11px] flex h-[40px] w-[59px] items-center justify-center pl-[1px] text-[17px] font-medium text-[#333]">
          Sheet1
          <span className="absolute bottom-0 left-0 h-[3px] w-[59px] bg-[#217346]" />
        </div>
        <div className="ml-[15px] flex w-[32px] justify-center"><svg width="16" height="16" viewBox="0 0 16 16"><path d="M8 0 V16 M0 8 H16" stroke="#666" strokeWidth="1.4" /></svg></div>
      </div>
      {/* Status bar */}
      <div className="flex h-[28px] shrink-0 items-center bg-white pl-[17px] pt-[6px] text-[14.8px] text-[#444]">
        <div className="w-[215px] whitespace-nowrap">Calculation Mode: Automatic</div>
        <div className="whitespace-nowrap">Workbook Statistics</div>
        <div className="flex-1" />
        <div className="w-[73px] whitespace-nowrap">Count: 7</div>
        <svg width="8" height="5" viewBox="0 0 8 5" className="mr-[53px]"><polygon points="0,0 8,0 4,5" fill="#666" /></svg>
        <div className="w-[232px] whitespace-nowrap">Give Feedback to Microsoft</div>
        <div className="h-[1.5px] w-[14px] bg-[#444]" />
        <div className="ml-[10px] w-[40px] text-center whitespace-nowrap">100%</div>
        <svg width="14" height="14" viewBox="0 0 14 14" className="ml-[7px] mr-[21px]"><path d="M7 0 V14 M0 7 H14" stroke="#444" strokeWidth="1.4" /></svg>
      </div>
      {/* Taskbar */}
      <div className="flex h-[50px] shrink-0 items-center bg-[linear-gradient(90deg,#1f2327_0%,#20232a_45%,#3d2a34_67%,#3b2b3a_78%,#2b2a3f_85%,#282a42_100%)] text-white">
        <div className="flex w-[60px] justify-center">
          <svg width="20" height="20" viewBox="0 0 20 20"><path d="M0 3 L8.5 1.7 V9.5 H0Z M9.5 1.5 L20 0 V9.5 H9.5Z M0 10.5 H8.5 V18.3 L0 17Z M9.5 10.5 H20 V20 L9.5 18.5Z" fill="#fff" /></svg>
        </div>
        <div className="flex h-[50px] w-[430px] items-center bg-[#f2f2f2] text-[#333]">
          <svg width="20" height="20" viewBox="0 0 20 20" fill="none" className="ml-[15px]"><circle cx="12.5" cy="7.5" r="6.5" stroke="#222" strokeWidth="1.3" /><path d="M8 12.5 L1 19" stroke="#222" strokeWidth="1.4" /></svg>
          <span className="ml-[15px] w-[280px] whitespace-nowrap text-[18.7px]">Type here to search</span>
          <svg width="100" height="50" viewBox="0 0 100 50" className="shrink-0">
            <path d="M18 3 L20 14 L22 16 L23 38 H13 L14 16 L16 14Z" fill="#a3bcc8" />
            <path d="M18 3 L18 38 H13 L14 16 L16 14Z" fill="#cfdde3" />
            <path d="M33 3 L35 14 L37 16 L38 38 H28 L29 16 L31 14Z" fill="#8fa9b6" />
            <path d="M33 3 L33 38 H28 L29 16 L31 14Z" fill="#bccdd5" />
            <path d="M23 33 L28 33" stroke="#7d97a5" strokeWidth="2" />
            <path d="M47 3 l1.5 3 l3.5 1.5 l-3.5 1.5 l-1.5 4 l-1.5 -4 l-3.5 -1.5 l3.5 -1.5Z" fill="#d77cf0" />
            <ellipse cx="82" cy="9" rx="9" ry="5" fill="#c6dfe8" />
            <ellipse cx="65" cy="13" rx="6" ry="3" fill="#c6dfe8" />
            <circle cx="85" cy="21" r="2.5" fill="#f9b81a" />
            <circle cx="6" cy="32" r="2.5" fill="#72cdf4" />
            <rect x="50" y="23" width="2" height="16" fill="#c4a98b" />
            <rect x="55" y="30" width="16" height="10" fill="#d6d8dc" />
            <rect x="65" y="26" width="12" height="14" fill="#e3e4e8" />
            <rect x="77" y="31" width="8" height="9" fill="#c8c3d8" />
            <rect x="85" y="34" width="15" height="6" fill="#d9d9d9" />
            <path d="M57 33 h12 M57 36 h12 M79 34 h18" stroke="#8c9299" strokeWidth=".8" />
            <path d="M0 50 L3 43 L15 40 L25 44 L38 41 L60 39 L100 41 V50Z" fill="#5a8f3c" />
            <path d="M25 44 L30 38 L36 44Z" fill="#d9b38c" />
            <ellipse cx="60" cy="47" rx="24" ry="3" fill="#a5dcec" />
          </svg>
        </div>
        <div className="flex w-[60px] justify-center"><span className="h-[18px] w-[18px] rounded-full border-[3px] border-white" /></div>
        <div className="flex w-[60px] justify-center"><svg width="20" height="20" viewBox="0 0 20 20" fill="none"><path d="M1 0 V3 H13 V0 M1 20 V17 H13 V20 M1 6 H13 V14 H1Z M18 0 V5 M18 9 V20" stroke="#fff" strokeWidth="1" /><rect x="16" y="6" width="3" height="3" fill="#fff" /></svg></div>
        <div className="ml-[9px] flex h-[50px] w-[51px] flex-col items-center justify-center border-b-[3px] border-[#a9dcf4] pt-[3px]">
          <svg width="28" height="24" viewBox="0 0 28 24"><path d="M0 3 a2 2 0 0 1 2-2 h7 l3 3 h14 a2 2 0 0 1 2 2 v15 a2 2 0 0 1-2 2 H2 a2 2 0 0 1-2-2Z" fill="#fdd466" /><path d="M0 1 h9 l3 3 H0Z" fill="#e3a21a" /><path d="M5 23 V14 a2 2 0 0 1 2-2 h14 a2 2 0 0 1 2 2 v9 h-4 v-6 H9 v6Z" fill="#3f8bd8" /><rect x="10" y="18" width="8" height="5" fill="#e9b93f" /></svg>
        </div>
        <div className="ml-[10px] flex w-[50px] justify-center">
          <svg width="30" height="30" viewBox="0 0 30 30"><path d="M8 6 V2 H22 V6" fill="none" stroke="#2aa9e0" strokeWidth="1.5" /><rect x="1" y="5" width="28" height="25" rx="3" fill="#f5f5f5" /><rect x="9" y="12" width="5.5" height="5.5" fill="#f25022" /><rect x="15.5" y="12" width="5.5" height="5.5" fill="#7fba00" /><rect x="9" y="18.5" width="5.5" height="5.5" fill="#00a4ef" /><rect x="15.5" y="18.5" width="5.5" height="5.5" fill="#ffb900" /></svg>
        </div>
        <div className="ml-[8px] flex h-[50px] w-[61px] items-center justify-center border-b-[3px] border-[#a9dcf4] bg-[#4f5158]">
          <Brave s={26} />
        </div>
        <div className="ml-[5px] flex w-[50px] justify-center">
          <svg width="23" height="30" viewBox="0 0 23 30"><rect width="23" height="30" rx="2" fill="#6d7b85" /><rect x="3" y="3" width="17" height="5" fill="#3fc1ee" /><rect x="3" y="10" width="5" height="5" fill="#cfd8dc" /><rect x="9" y="10" width="5" height="5" fill="#cfd8dc" /><rect x="15" y="10" width="5" height="5" fill="#cfd8dc" /><rect x="3" y="16" width="5" height="5" fill="#cfd8dc" /><rect x="9" y="16" width="5" height="5" fill="#cfd8dc" /><rect x="15" y="16" width="5" height="11" fill="#0e5d9f" /><rect x="3" y="22" width="5" height="5" fill="#cfd8dc" /><rect x="9" y="22" width="5" height="5" fill="#cfd8dc" /></svg>
        </div>
        <div className="flex-1" />
        <svg width="26" height="26" viewBox="0 0 26 26" className="shrink-0"><circle cx="13" cy="12" r="12" fill="#f5a80a" /><path d="M0 13 C5 20 20 20 25 13 A12.5 12.5 0 0 1 0 13Z" fill="#e97a0f" /><ellipse cx="16" cy="14" rx="8" ry="4.5" fill="#dceaf2" /><circle cx="23" cy="23" r="3.5" fill="#e81123" /></svg>
        <div className="ml-[12px] w-[165px] whitespace-nowrap text-[17.7px]">79°F&nbsp; Mostly sunny</div>
        <div className="flex w-[40px] justify-center"><svg width="16" height="9" viewBox="0 0 16 9" fill="none"><path d="M1 8 L8 1 L15 8" stroke="#fff" strokeWidth="1.2" /></svg></div>
        <div className="flex w-[40px] justify-center"><svg width="21" height="14" viewBox="0 0 21 14"><path d="M3 13 a3 3 0 0 1 0-6 a6 6 0 0 1 11-2 a4.5 4.5 0 0 1 4 8Z" fill="#e8e8e8" /></svg></div>
        <div className="flex w-[40px] justify-center"><svg width="19" height="11" viewBox="0 0 19 11" fill="none"><rect x=".7" y=".7" width="16" height="9.6" stroke="#fff" /><rect x="2" y="2" width="9" height="7" fill="#fff" /><rect x="17.5" y="3.5" width="1.5" height="4" fill="#fff" /></svg></div>
        <div className="flex w-[40px] justify-center"><svg width="18" height="18" viewBox="0 0 18 18" fill="none"><path d="M1 17 A16 16 0 0 1 17 1 M5 17 A12 12 0 0 1 17 5 M9 17 A8 8 0 0 1 17 9" stroke="#eee" strokeWidth="1" strokeDasharray="2 .6" /><circle cx="14" cy="15" r="1.7" fill="#fff" /></svg></div>
        <div className="flex w-[40px] justify-center"><svg width="20" height="18" viewBox="0 0 20 18" fill="none"><path d="M1 6 H4 L9 2 V16 L4 12 H1Z M12 6 C13.5 8 13.5 10 12 12 M15 3 C18 7 18 11 15 15" stroke="#fff" strokeWidth="1.1" /></svg></div>
        <div className="ml-[5px] flex w-[40px] justify-center"><svg width="20" height="22" viewBox="0 0 20 22" fill="none"><path d="M2 21 L4 15 L11 2 L14 3 L7 17Z M1 13 C6 9 12 8 18 9" stroke="#e8e8e8" strokeWidth="1.2" /></svg></div>
        <div className="flex w-[94px] flex-col items-center text-[15px] leading-[24px]">
          <span>1:40 PM</span>
          <span>8/31/2022</span>
        </div>
        <div className="relative flex w-[40px] justify-center">
          <svg width="20" height="20" viewBox="0 0 20 20"><path d="M0 0 H20 V15 H0Z" fill="#fff" /><path d="M3 4 H17 M3 8 H17 M3 12 H13" stroke="#333" strokeWidth="1" /></svg>
          <span className="absolute left-[23px] top-[10px] flex h-[21px] w-[21px] items-center justify-center rounded-full border border-[#999] bg-[#333] text-[13px] font-medium">10</span>
        </div>
        <div className="w-[21px]" />
      </div>
    </div>
  );
}
